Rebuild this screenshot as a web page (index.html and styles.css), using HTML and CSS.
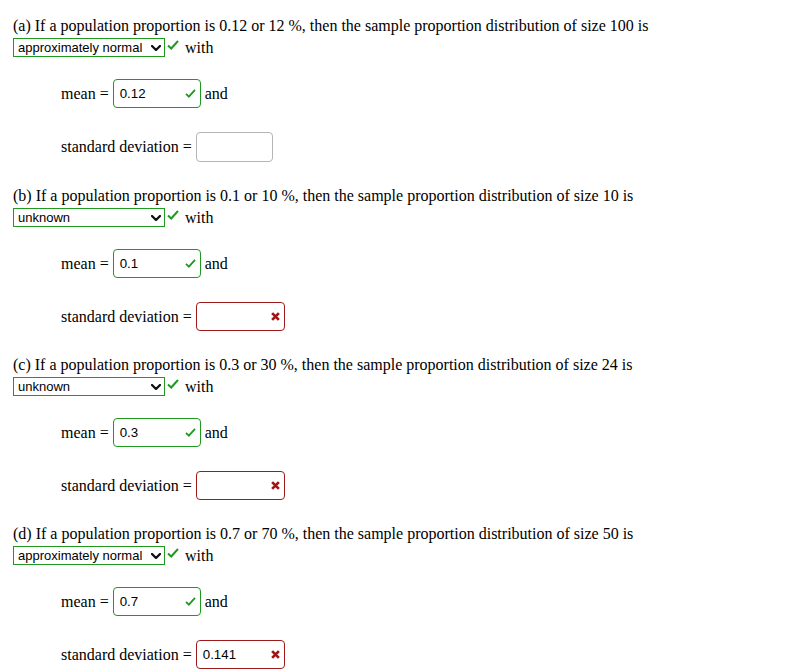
FILE: index.html
```html
<!DOCTYPE html>
<html>
<head>
<meta charset="utf-8">
<link rel="stylesheet" href="styles.css">
</head>
<body>
<div class="page">

  <div class="part">
    <div class="q">(a) If a population proportion is 0.12 or 12 %, then the sample proportion distribution of size 100 is</div>
    <div class="sel-row">
      <span class="sel ok"><span class="sel-text">approximately normal</span><svg class="chev" viewBox="0 0 10 6" width="10" height="6"><polyline points="1,1 5,5 9,1"/></svg></span>
      <svg class="mark" viewBox="0 0 12 10" width="12" height="10"><polyline points="1,5.5 4.2,8.5 11,1"/></svg>
      <span class="with">with</span>
    </div>
    <div class="row mean-row">
      <span class="lbl">mean =</span>
      <span class="field ok w88"><span class="val">0.12</span><svg class="imark" viewBox="0 0 12 10" width="11" height="9"><polyline points="1,5.5 4.2,8.5 11,1"/></svg></span>
      <span class="lbl">and</span>
    </div>
    <div class="row sd-row">
      <span class="lbl">standard deviation =</span>
      <span class="field blank w77"></span>
    </div>
  </div>

  <div class="part">
    <div class="q">(b) If a population proportion is 0.1 or 10 %, then the sample proportion distribution of size 10 is</div>
    <div class="sel-row">
      <span class="sel ok"><span class="sel-text">unknown</span><svg class="chev" viewBox="0 0 10 6" width="10" height="6"><polyline points="1,1 5,5 9,1"/></svg></span>
      <svg class="mark" viewBox="0 0 12 10" width="12" height="10"><polyline points="1,5.5 4.2,8.5 11,1"/></svg>
      <span class="with">with</span>
    </div>
    <div class="row mean-row">
      <span class="lbl">mean =</span>
      <span class="field ok w88"><span class="val">0.1</span><svg class="imark" viewBox="0 0 12 10" width="11" height="9"><polyline points="1,5.5 4.2,8.5 11,1"/></svg></span>
      <span class="lbl">and</span>
    </div>
    <div class="row sd-row">
      <span class="lbl">standard deviation =</span>
      <span class="field bad w89"><span class="val"></span><svg class="xmark" viewBox="0 0 8 8" width="9" height="9"><path d="M1,1 L7,7 M7,1 L1,7"/></svg></span>
    </div>
  </div>

  <div class="part">
    <div class="q">(c) If a population proportion is 0.3 or 30 %, then the sample proportion distribution of size 24 is</div>
    <div class="sel-row">
      <span class="sel ok"><span class="sel-text">unknown</span><svg class="chev" viewBox="0 0 10 6" width="10" height="6"><polyline points="1,1 5,5 9,1"/></svg></span>
      <svg class="mark" viewBox="0 0 12 10" width="12" height="10"><polyline points="1,5.5 4.2,8.5 11,1"/></svg>
      <span class="with">with</span>
    </div>
    <div class="row mean-row">
      <span class="lbl">mean =</span>
      <span class="field ok w88"><span class="val">0.3</span><svg class="imark" viewBox="0 0 12 10" width="11" height="9"><polyline points="1,5.5 4.2,8.5 11,1"/></svg></span>
      <span class="lbl">and</span>
    </div>
    <div class="row sd-row">
      <span class="lbl">standard deviation =</span>
      <span class="field bad w89"><span class="val"></span><svg class="xmark" viewBox="0 0 8 8" width="9" height="9"><path d="M1,1 L7,7 M7,1 L1,7"/></svg></span>
    </div>
  </div>

  <div class="part">
    <div class="q">(d) If a population proportion is 0.7 or 70 %, then the sample proportion distribution of size 50 is</div>
    <div class="sel-row">
      <span class="sel ok"><span class="sel-text">approximately normal</span><svg class="chev" viewBox="0 0 10 6" width="10" height="6"><polyline points="1,1 5,5 9,1"/></svg></span>
      <svg class="mark" viewBox="0 0 12 10" width="12" height="10"><polyline points="1,5.5 4.2,8.5 11,1"/></svg>
      <span class="with">with</span>
    </div>
    <div class="row mean-row">
      <span class="lbl">mean =</span>
      <span class="field ok w88"><span class="val">0.7</span><svg class="imark" viewBox="0 0 12 10" width="11" height="9"><polyline points="1,5.5 4.2,8.5 11,1"/></svg></span>
      <span class="lbl">and</span>
    </div>
    <div class="row sd-row">
      <span class="lbl">standard deviation =</span>
      <span class="field bad w89"><span class="val">0.141</span><svg class="xmark" viewBox="0 0 8 8" width="9" height="9"><path d="M1,1 L7,7 M7,1 L1,7"/></svg></span>
    </div>
  </div>

</div>
</body>
</html>
```
FILE: styles.css
```css
html, body {
  margin: 0;
  padding: 0;
  background: #ffffff;
}
.page {
  padding: 15px 0 0 13px;
  font-family: "Liberation Serif", "Times New Roman", serif;
  font-size: 16px;
  color: #000000;
  display: flex;
  flex-direction: column;
  gap: 23px;
}
.part {
  display: flex;
  flex-direction: column;
}
.q {
  height: 22px;
  line-height: 22px;
  white-space: nowrap;
}
.sel-row {
  margin-top: 1px;
  display: flex;
  align-items: center;
  height: 19px;
}
.sel {
  box-sizing: border-box;
  width: 152px;
  height: 19px;
  border: 1px solid #1f9a1f;
  display: flex;
  align-items: center;
  justify-content: space-between;
  padding: 0 3px 0 4px;
  font-family: "Liberation Sans", Arial, sans-serif;
  font-size: 13px;
  color: #000000;
}
.chev polyline {
  fill: none;
  stroke: #111111;
  stroke-width: 2.3;
  stroke-linecap: round;
  stroke-linejoin: round;
}
.mark {
  margin-left: 2px;
  align-self: flex-start;
  margin-top: 2px;
}
.mark polyline, .imark polyline {
  fill: none;
  stroke: #1f9a1f;
  stroke-width: 2;
}
.with {
  margin-left: 6px;
}
.row {
  display: flex;
  align-items: center;
  padding-left: 48px;
  gap: 4px;
}
.mean-row {
  margin-top: 22px;
}
.sd-row {
  margin-top: 24px;
}
.field {
  box-sizing: border-box;
  height: 29px;
  border: 1px solid #b5b5b5;
  border-radius: 4px;
  display: flex;
  align-items: center;
  justify-content: space-between;
  padding: 0 4px 0 6px;
  font-family: "Liberation Sans", Arial, sans-serif;
  font-size: 13.3px;
  color: #000000;
}
.field.blank {
  height: 30px;
}
.field.ok {
  border-color: #1f9a1f;
}
.field.bad {
  border-color: #9e1b1b;
  height: 29px;
}
.w88 { width: 88px; }
.w77 { width: 77px; }
.w89 { width: 89px; }
.xmark path {
  fill: none;
  stroke: #a01515;
  stroke-width: 2.4;
}
```
